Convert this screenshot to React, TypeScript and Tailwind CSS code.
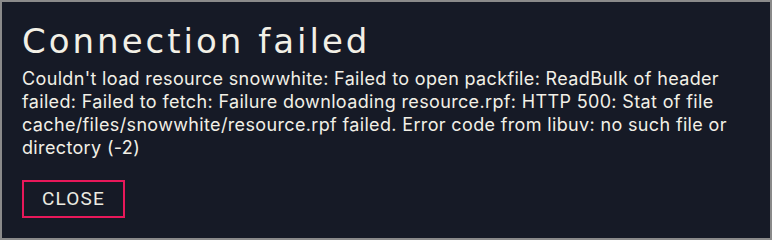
import React from "react";

export default function App() {
  return (
    <div className="w-[772px] h-[240px] bg-[#8a8a8a] p-[2px]">
      <div className="h-full w-full bg-[#161a26] px-5 pt-[18px] text-[#f2f0e6]">
        <h1 className="font-['DejaVu_Sans',sans-serif] text-[34px] leading-[42px] tracking-[3px]">
          Connection failed
        </h1>
        <p className="mt-[5px] font-['Inter',sans-serif] text-[18px] leading-[23px] tracking-[0.35px]">
          Couldn't load resource snowwhite: Failed to open packfile: ReadBulk of header failed: Failed to
          fetch: Failure downloading resource.rpf: HTTP 500: Stat of file cache/files/snowwhite/resource.rpf
          failed. Error code from libuv: no such file or directory (-2)
        </p>
        <button className="mt-[21px] flex h-[38px] w-[103px] items-center justify-center border-2 border-[#e8185a] font-['Roboto',sans-serif] text-[19px] tracking-[1.2px] text-[#ecebe2]">
          CLOSE
        </button>
      </div>
    </div>
  );
}
